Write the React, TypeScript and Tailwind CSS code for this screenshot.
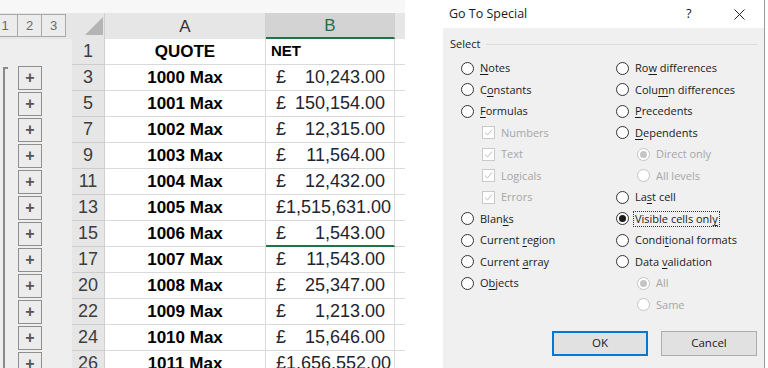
import * as React from "react";

type Row = { n: string; q: string; v: string; green?: boolean };

const rows: Row[] = [
  { n: "3", q: "1000 Max", v: "10,243.00" },
  { n: "5", q: "1001 Max", v: "150,154.00" },
  { n: "7", q: "1002 Max", v: "12,315.00" },
  { n: "9", q: "1003 Max", v: "11,564.00" },
  { n: "11", q: "1004 Max", v: "12,432.00" },
  { n: "13", q: "1005 Max", v: "1,515,631.00" },
  { n: "15", q: "1006 Max", v: "1,543.00", green: true },
  { n: "17", q: "1007 Max", v: "11,543.00" },
  { n: "20", q: "1008 Max", v: "25,347.00" },
  { n: "22", q: "1009 Max", v: "1,213.00" },
  { n: "24", q: "1010 Max", v: "15,646.00" },
  { n: "26", q: "1011 Max", v: "1,656,552.00" },
];

const sheetFont = { fontFamily: '"Liberation Sans", Arial, sans-serif' };
const uiFont = { fontFamily: '"Segoe UI", "Open Sans", sans-serif' };

function PlusButton() {
  return (
    <div className="flex h-[24px] w-[24px] items-center justify-center border border-[#8e8e8e] bg-[#ececec] text-[16px] font-bold leading-none text-[#555]">
      +
    </div>
  );
}

function Sheet() {
  return (
    <div className="flex h-full w-[405px] flex-col bg-[#f4f4f4]" style={sheetFont}>
      <div className="h-[13px] shrink-0 bg-[#f7f7f7]" />
      {/* column header row */}
      <div className="flex h-[26px] shrink-0 bg-[#e6e6e6]">
        <div className="flex w-[72px] items-start pt-[1px]">
          {["1", "2", "3"].map((l, i) => (
            <div
              key={l}
              className={
                "flex h-[23px] items-center justify-center border border-[#a9a9a9] bg-[#ececec] text-[13px] text-[#6b6b6b] " +
                (i === 0 ? "ml-[-8px] w-[26px]" : "ml-[-1px] w-[25px]")
              }
            >
              {l}
            </div>
          ))}
        </div>
        <div className="relative w-[33px] border-r border-[#cfcfcf]">
          <svg className="absolute left-[13px] top-[4px]" width="18" height="18" viewBox="0 0 18 18">
            <polygon points="18,0 18,18 0,18" fill="#b4b4b4" />
          </svg>
        </div>
        <div className="flex w-[161px] items-center justify-center border-r border-[#d2d2d2] pt-[2px] text-[17px] text-[#333]">
          A
        </div>
        <div className="flex w-[129px] items-center justify-center border-b-2 border-r border-b-[#217346] border-r-[#d2d2d2] bg-[#d3d3d3] pt-[2px] text-[17px] text-[#2f6b4a]">
          B
        </div>
        <div className="w-[10px]" />
      </div>
      {/* body */}
      <div className="flex min-h-0 flex-1">
        <div className="relative w-[72px] shrink-0 bg-[#eeeeee]">
          <div className="absolute left-[3px] top-[28px] h-[400px] w-[5px] border-l-2 border-t-2 border-[#8a8a8a]" />
          <div className="flex flex-col pl-[18px] pt-[27px]">
            {rows.map((r) => (
              <div key={r.n} className="flex h-[26px] items-start">
                <PlusButton />
              </div>
            ))}
          </div>
        </div>
        <div className="flex flex-col">
          {[{ n: "1", q: "QUOTE", v: "" }, ...rows].map((r, i) => (
            <div key={r.n} className="flex h-[26px] shrink-0">
              <div className="flex w-[33px] items-center justify-center border-b border-r border-b-[#cdcdcd] border-r-[#cfcfcf] bg-[#e6e6e6] text-[18px] text-[#3d3d3d]">
                {r.n}
              </div>
              <div className="flex w-[161px] items-center justify-center border-b border-r border-[#dadada] bg-white text-[17px] font-bold text-black">
                {r.q}
              </div>
              <div
                className={
                  "flex w-[129px] items-center justify-between border-r border-r-[#dadada] bg-white pl-[10px] pr-[9px] text-[18px] text-[#1e2430] " +
                  (r.green ? "border-b-2 border-b-[#217346]" : "border-b border-b-[#dadada]")
                }
              >
                {i === 0 ? (
                  <span className="text-[15px] font-bold text-black" style={{ marginLeft: -5 }}>
                    NET
                  </span>
                ) : (
                  <>
                    <span>£</span>
                    <span>{r.v}</span>
                  </>
                )}
              </div>
              <div className="w-[10px] border-b border-[#dadada] bg-white" />
            </div>
          ))}
        </div>
      </div>
    </div>
  );
}

function Radio({ checked, disabled }: { checked?: boolean; disabled?: boolean }) {
  return (
    <span
      className={
        "flex h-[13px] w-[13px] shrink-0 items-center justify-center rounded-full border bg-white " +
        (disabled ? "border-[#c4c4c4]" : "border-[#333]")
      }
    >
      {checked && (
        <span className={"h-[7px] w-[7px] rounded-full " + (disabled ? "bg-[#c4c4c4]" : "bg-[#1a1a1a]")} />
      )}
    </span>
  );
}

function Check() {
  return (
    <span className="flex h-[13px] w-[13px] shrink-0 items-center justify-center border border-[#c9c9c9] bg-white">
      <svg width="9" height="9" viewBox="0 0 9 9">
        <path d="M1 4.6 L3.5 7 L8 1.6" fill="none" stroke="#bdbdbd" strokeWidth="1" />
      </svg>
    </span>
  );
}

type Opt = {
  label: React.ReactNode;
  kind?: "radio" | "check";
  indent?: boolean;
  disabled?: boolean;
  checked?: boolean;
  focus?: boolean;
};

function u(a: string, k: string, b: string) {
  return (
    <>
      {a}
      <span className="underline underline-offset-2">{k}</span>
      {b}
    </>
  );
}

const leftOpts: Opt[] = [
  { label: u("", "N", "otes") },
  { label: u("C", "o", "nstants") },
  { label: u("", "F", "ormulas") },
  { label: "Numbers", kind: "check", indent: true, disabled: true },
  { label: "Text", kind: "check", indent: true, disabled: true },
  { label: "Logicals", kind: "check", indent: true, disabled: true },
  { label: "Errors", kind: "check", indent: true, disabled: true },
  { label: u("Blan", "k", "s") },
  { label: u("Current ", "r", "egion") },
  { label: u("Current ", "a", "rray") },
  { label: u("O", "b", "jects") },
];

const rightOpts: Opt[] = [
  { label: u("Ro", "w", " differences") },
  { label: u("Colu", "m", "n differences") },
  { label: u("", "P", "recedents") },
  { label: u("", "D", "ependents") },
  { label: "Direct only", indent: true, disabled: true, checked: true },
  { label: "All levels", indent: true, disabled: true },
  { label: u("La", "s", "t cell") },
  { label: u("Visible cells onl", "y", ""), checked: true, focus: true },
  { label: u("Condi", "t", "ional formats") },
  { label: u("Data ", "v", "alidation") },
  { label: "All", indent: true, disabled: true, checked: true },
  { label: "Same", indent: true, disabled: true },
];

function Option({ o }: { o: Opt }) {
  return (
    <div className={"flex h-[21.5px] items-center " + (o.indent ? "pl-[21px]" : "")}>
      {o.kind === "check" ? <Check /> : <Radio checked={o.checked} disabled={o.disabled} />}
      <span
        className={
          "ml-[4px] whitespace-nowrap leading-[14px] " +
          (o.disabled ? "text-[#a6a6a6] " : "text-[#1a1a1a] ") +
          (o.focus ? "border border-dotted border-[#333] px-[1px]" : "border border-transparent px-[1px]")
        }
      >
        {o.label}
      </span>
    </div>
  );
}

function Dialog() {
  return (
    <div className="flex h-full w-[322px] shrink-0 flex-col border-r border-[#9a9a9a] bg-[#f0f0f0] text-[11px]" style={uiFont}>
      <div className="flex h-[28px] shrink-0 items-center bg-white pl-[6px] text-[12.5px] text-[#1a1a1a]">
        <span className="flex-1">Go To Special</span>
        <span className="w-[48px] text-[13px]">?</span>
        <svg className="mr-[19px]" width="11" height="11" viewBox="0 0 11 11">
          <path d="M0.5 0.5 L10.5 10.5 M10.5 0.5 L0.5 10.5" stroke="#222" strokeWidth="1" />
        </svg>
      </div>
      <div className="flex items-center pl-[7px] pr-[7px] pt-[8px]">
        <span className="text-[#1a1a1a]">Select</span>
        <div className="ml-[6px] h-px flex-1 bg-[#dcdcdc]" />
      </div>
      <div className="flex pl-[18px] pt-[5px]">
        <div className="flex w-[155px] flex-col">
          {leftOpts.map((o, i) => (
            <Option key={i} o={o} />
          ))}
        </div>
        <div className="flex flex-col">
          {rightOpts.map((o, i) => (
            <Option key={i} o={o} />
          ))}
        </div>
      </div>
      <div className="flex justify-end gap-[13px] pr-[7px] pt-[15px]">
        <button className="h-[25px] w-[96px] border-2 border-[#0078d7] bg-[#e1e1e1] text-[11.5px] text-[#1a1a1a]">
          OK
        </button>
        <button className="h-[25px] w-[96px] border border-[#adadad] bg-[#e1e1e1] text-[11.5px] text-[#1a1a1a]">
          Cancel
        </button>
      </div>
    </div>
  );
}

export default function App() {
  return (
    <div className="flex h-[368px] w-[768px] overflow-hidden bg-white">
      <Sheet />
      <div className="w-[38px] shrink-0 bg-white" />
      <Dialog />
      <div className="flex-1 bg-white" />
    </div>
  );
}
